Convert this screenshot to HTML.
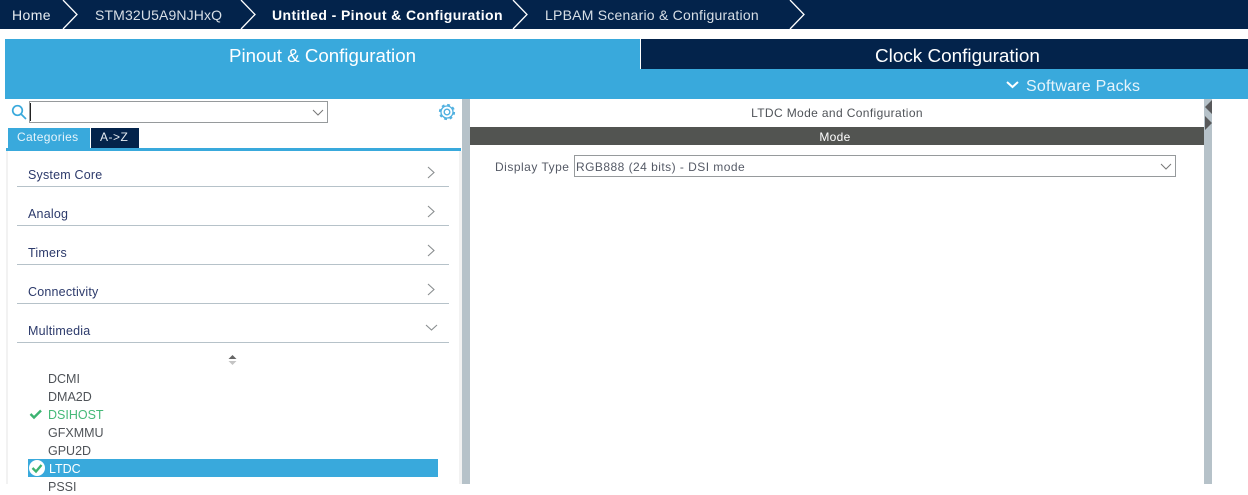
<!DOCTYPE html>
<html><head><meta charset="utf-8">
<style>
html,body{margin:0;padding:0;background:#fff}
body{width:1248px;height:484px;overflow:hidden;position:relative;font-family:"Liberation Sans",sans-serif}
.a{position:absolute;white-space:nowrap}
.b{position:absolute}
svg{position:absolute;overflow:visible}
.cat{font-size:12.5px;color:#2c3a6b;left:28px;letter-spacing:.2px;line-height:16px}
.ln{position:absolute;left:17px;width:432px;height:1px;background:#b6c2c9}
.it{font-size:12.5px;color:#4f5358;left:48px;line-height:16px}
</style></head><body>
<div class="b" style="left:0;top:0;width:1248px;height:29px;background:#03234b"></div>
<div class="a" style="left:12px;top:7px;font-size:14px;line-height:16px;color:#e8edf2;letter-spacing:.4px">Home</div>
<div class="a" style="left:95px;top:7px;font-size:14px;line-height:16px;color:#d8dfe6;letter-spacing:.14px">STM32U5A9NJHxQ</div>
<div class="a" style="left:272px;top:7px;font-size:14px;line-height:16px;color:#fff;font-weight:bold;letter-spacing:.4px">Untitled - Pinout &amp; Configuration</div>
<div class="a" style="left:545px;top:7px;font-size:14px;line-height:16px;color:#d8dfe6;letter-spacing:.23px">LPBAM Scenario &amp; Configuration</div>
<svg style="left:0;top:0" width="1248" height="29" fill="none" stroke="#fff" stroke-width="1.3">
<path d="M63 0L77 14.500L63 29M241 0L255 14.500L241 29M513 0L527 14.500L513 29M790 0L804 14.500L790 29"/>
</svg>
<div class="b" style="left:5px;top:39px;width:1243px;height:60px;background:#39a9dc"></div>
<div class="b" style="left:640px;top:39px;width:1px;height:30px;background:#fff"></div>
<div class="b" style="left:641px;top:39px;width:607px;height:30px;background:#03234b"></div>
<div class="a" style="left:229px;top:45px;font-size:18.7px;line-height:21px;color:#fff">Pinout &amp; Configuration</div>
<div class="a" style="left:875px;top:46px;font-size:18.9px;line-height:21px;color:#fff">Clock Configuration</div>
<div class="a" style="left:1026px;top:77px;font-size:16px;line-height:19px;color:#e6f4fb;letter-spacing:.22px">Software Packs</div>
<svg style="left:1006px;top:81px" width="13" height="8" fill="none" stroke="#fff" stroke-width="2"><path d="M1 1L6.500 6L12 1"/></svg>

<svg style="left:11px;top:104px" width="16" height="16" fill="none" stroke="#39a9dc" stroke-width="1.700"><circle cx="6.500" cy="6.500" r="4.800"/><path d="M10 10L15 15"/></svg>
<div class="b" style="left:29px;top:101px;width:297px;height:20px;border:1px solid #969a9c;background:#fff"></div>
<div class="b" style="left:30px;top:103px;width:1px;height:18px;background:#222"></div>
<svg style="left:312px;top:109px" width="12" height="7" fill="none" stroke="#777" stroke-width="1"><path d="M1 1L6 6L11 1"/></svg>
<svg style="left:438px;top:103px" width="18" height="18" fill="none" stroke="#4fb0e0"><circle cx="9" cy="9" r="2.800" stroke-width="1.400"/><circle cx="9" cy="9" r="6" stroke-width="1.300"/><circle cx="9" cy="9" r="7.300" stroke-width="1.600" stroke-dasharray="2.900 2.830"/></svg>

<div class="b" style="left:8px;top:128px;width:82px;height:20px;background:#39a9dc"></div>
<div class="b" style="left:91px;top:128px;width:48px;height:20px;background:#03234b"></div>
<div class="a" style="left:17px;top:130px;font-size:12px;line-height:15px;color:#e6f4fb;letter-spacing:.35px">Categories</div>
<div class="a" style="left:100px;top:130px;font-size:12px;line-height:15px;color:#e6ecf2;letter-spacing:.5px">A-&gt;Z</div>
<div class="b" style="left:6px;top:148px;width:455px;height:3px;background:#39a9dc"></div>
<div class="b" style="left:6px;top:151px;width:2px;height:333px;background:#f2f2f2"></div>
<div class="b" style="left:459px;top:151px;width:3px;height:333px;background:#f2f2f2"></div>
<div class="b" style="left:462px;top:99px;width:8px;height:385px;background:#b6c2c9"></div>

<div class="a cat" style="top:167px">System Core</div><div class="ln" style="top:186px"></div>
<div class="a cat" style="top:206px">Analog</div><div class="ln" style="top:225px"></div>
<div class="a cat" style="top:245px">Timers</div><div class="ln" style="top:264px"></div>
<div class="a cat" style="top:284px">Connectivity</div><div class="ln" style="top:303px"></div>
<div class="a cat" style="top:323px">Multimedia</div><div class="ln" style="top:342px"></div>
<svg style="left:420px;top:160px" width="20" height="180" fill="none" stroke="#8a8e90" stroke-width="1.100">
<path d="M8 7L14 12.500L8 18M8 46L14 51.500L8 57M8 85L14 90.500L8 96M8 124L14 129.500L8 135M6 165L11.500 170L17 165"/></svg>
<svg style="left:228px;top:354px" width="10" height="12"><path d="M0.500 5H8.500L4.500 1Z" fill="#666"/><path d="M0.500 7H8.500L4.500 11Z" fill="#c4c4c4"/></svg>

<div class="a it" style="top:371px">DCMI</div>
<div class="a it" style="top:389px">DMA2D</div>
<div class="a it" style="top:407px;color:#45b978">DSIHOST</div>
<svg style="left:29px;top:408px" width="14" height="12" fill="none" stroke="#3cb371" stroke-width="2.400"><path d="M1.500 6L5 9.500L12 2.500"/></svg>
<div class="a it" style="top:425px">GFXMMU</div>
<div class="a it" style="top:443px">GPU2D</div>
<div class="b" style="left:28px;top:459px;width:410px;height:18px;background:#39a9dc"></div>
<svg style="left:29px;top:460px" width="16" height="16"><circle cx="8" cy="8" r="8" fill="#fff"/><path d="M3.500 8L7 11.500L12.500 5" fill="none" stroke="#3cb371" stroke-width="2.300"/></svg>
<div class="a it" style="top:461px;left:49px;color:#fff">LTDC</div>
<div class="a it" style="top:479px">PSSI</div>

<div class="a" style="left:470px;width:734px;text-align:center;top:106px;font-size:12px;line-height:15px;color:#4f5358;letter-spacing:.37px">LTDC Mode and Configuration</div>
<div class="b" style="left:470px;top:127px;width:734px;height:18px;background:#525451"></div>
<div class="a" style="left:470px;width:730px;text-align:center;top:130px;font-size:12px;line-height:15px;color:#fff;letter-spacing:.3px">Mode</div>
<div class="a" style="left:495px;top:159px;font-size:12px;line-height:16px;color:#555a66;letter-spacing:.5px">Display Type</div>
<div class="b" style="left:574px;top:155px;width:600px;height:20px;border:1px solid #969a9c;background:#fff"></div>
<div class="a" style="left:576px;top:159px;font-size:12px;line-height:16px;color:#555a66;letter-spacing:.46px">RGB888 (24 bits) - DSI mode</div>
<svg style="left:1160px;top:163px" width="12" height="7" fill="none" stroke="#777" stroke-width="1"><path d="M1 1L6 6L11 1"/></svg>

<div class="b" style="left:1204px;top:99px;width:8px;height:385px;background:#b6c2c9"></div>
<svg style="left:1204px;top:99px" width="8" height="32"><path d="M1 8L8 1V15ZM1 17V31L8 24Z" fill="#58595b"/></svg>
</body></html>
